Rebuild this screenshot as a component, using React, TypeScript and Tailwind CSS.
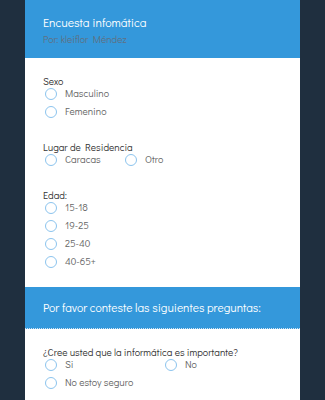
import React from "react";

const Radio = ({ label, className = "" }: { label: string; className?: string }) => (
  <div className={`flex items-center h-[18px] ${className}`}>
    <span className="w-[12px] h-[12px] rounded-full border-[1.5px] border-[#8cc4ee] ml-[2px] mr-[8px] shrink-0" />
    <span className="text-[10px] text-[#666] leading-none">{label}</span>
  </div>
);

const Label = ({ text, className = "" }: { text: string; className?: string }) => (
  <div className={`text-[10px] text-[#333] leading-[12px] mb-[-3px] ${className}`}>{text}</div>
);

export default function App() {
  return (
    <div className="h-[400px] overflow-hidden bg-[#1f2f3f] flex justify-center" style={{ fontFamily: "'Didact Gothic', 'Noto Sans', 'Open Sans', sans-serif" }}>
      <div className="w-[275px] bg-white flex flex-col">
        <div className="bg-[#3498db] h-[58px] px-[18px] pt-[14px] shrink-0">
          <div className="text-white text-[12px] leading-[16px]">Encuesta infomática</div>
          <div className="text-[#5f7183] text-[10px] leading-[12px] mt-[4px]">Por: kleiflor Méndez</div>
        </div>
        <div className="px-[18px] pt-[18px]">
          <Label text="Sexo" />
          <Radio label="Masculino" />
          <Radio label="Femenino" />
          <Label text="Lugar de Residencia" className="mt-[21px]" />
          <div className="flex">
            <Radio label="Caracas" className="w-[80px]" />
            <Radio label="Otro" />
          </div>
          <Label text="Edad:" className="mt-[21px]" />
          <Radio label="15-18" />
          <Radio label="19-25" />
          <Radio label="25-40" />
          <Radio label="40-65+" />
        </div>
        <div className="bg-[#3498db] h-[42px] mt-[16px] px-[18px] flex items-center border-b border-dotted border-[#cfe3f3] shrink-0">
          <div className="text-white text-[11.8px] whitespace-nowrap">Por favor conteste las siguientes preguntas:</div>
        </div>
        <div className="px-[18px] pt-[18px]">
          <Label text="¿Cree usted que la informática es importante?" />
          <div className="flex">
            <Radio label="Si" className="w-[120px]" />
            <Radio label="No" />
          </div>
          <Radio label="No estoy seguro" />
        </div>
      </div>
    </div>
  );
}
